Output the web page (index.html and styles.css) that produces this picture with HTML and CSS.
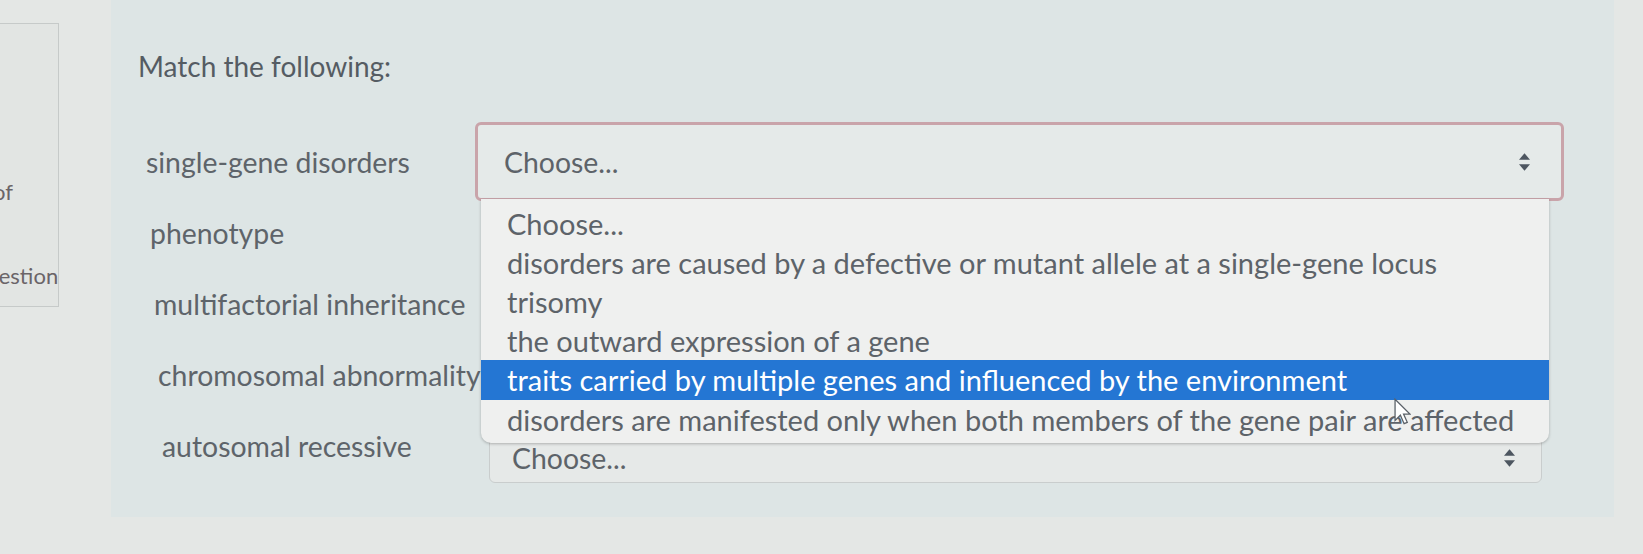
FILE: index.html
```html
<!DOCTYPE html>
<html lang="en">
<head>
<meta charset="utf-8">
<title>Match the following</title>
<link rel="stylesheet" href="styles.css">
</head>
<body>
<div class="page">
  <aside class="sidebar">
    <span class="side-of">of</span>
    <span class="side-question">Question</span>
  </aside>
  <main class="panel">
    <h1 class="title">Match the following:</h1>
    <div class="rows">
      <div class="label">single-gene disorders</div>
      <div class="cell">
        <div class="select focused"><span>Choose...</span><svg class="arrows" viewBox="0 0 10 16"><path d="M5 0 L10 6 H0 Z"/><path d="M0 10 H10 L5 16 Z"/></svg></div>
        <ul class="menu">
          <li>Choose...</li>
          <li>disorders are caused by a defective or mutant allele at a single-gene locus</li>
          <li>trisomy</li>
          <li>the outward expression of a gene</li>
          <li class="active">traits carried by multiple genes and influenced by the environment</li>
          <li>disorders are manifested only when both members of the gene pair are affected</li>
          <svg class="cursor" viewBox="0 0 16 26"><path d="M1 1 L1 21 L6 16 L9.5 24 L12.5 22.7 L9 15 L15 15 Z"/></svg>
        </ul>
      </div>
      <div class="label l2">phenotype</div>
      <div class="cell"><div class="select inner"><span>Choose...</span><svg class="arrows" viewBox="0 0 10 16"><path d="M5 0 L10 6 H0 Z"/><path d="M0 10 H10 L5 16 Z"/></svg></div></div>
      <div class="label l3">multifactorial inheritance</div>
      <div class="cell"><div class="select inner"><span>Choose...</span><svg class="arrows" viewBox="0 0 10 16"><path d="M5 0 L10 6 H0 Z"/><path d="M0 10 H10 L5 16 Z"/></svg></div></div>
      <div class="label l4">chromosomal abnormality</div>
      <div class="cell"><div class="select inner"><span>Choose...</span><svg class="arrows" viewBox="0 0 10 16"><path d="M5 0 L10 6 H0 Z"/><path d="M0 10 H10 L5 16 Z"/></svg></div></div>
      <div class="label l5">autosomal recessive</div>
      <div class="cell"><div class="select last"><span>Choose...</span><svg class="arrows" viewBox="0 0 10 16"><path d="M5 0 L10 6 H0 Z"/><path d="M0 10 H10 L5 16 Z"/></svg></div></div>
    </div>
  </main>
</div>
</body>
</html>
```
FILE: styles.css
```css
html, body {
  margin: 0;
  padding: 0;
}
body {
  width: 1643px;
  height: 554px;
  overflow: hidden;
  background: #e4e7e5;
  font-family: Lato, "Liberation Sans", sans-serif;
  color: #5e646a;
}
.page {
  display: flex;
  align-items: flex-start;
  height: 554px;
}
.sidebar {
  width: 58px;
  height: 282px;
  margin-top: 23px;
  border: 1px solid #c6cac9;
  border-left: none;
  background: #e2e5e3;
  display: flex;
  flex-direction: column;
  overflow: hidden;
  font-size: 22px;
  line-height: 26px;
  color: #6a6468;
  flex-shrink: 0;
}
.side-of {
  margin-top: 155px;
  margin-left: -7px;
}
.side-question {
  margin-top: 58px;
  margin-left: -31px;
  white-space: nowrap;
}
.panel {
  margin-left: 52px;
  width: 1503px;
  height: 517px;
  background: #dde5e5;
  padding-left: 27px;
  box-sizing: border-box;
  flex-shrink: 0;
}
.title {
  margin: 46px 0 0 0;
  font-size: 28px;
  font-weight: 400;
  line-height: 40px;
  color: #555c63;
}
.rows {
  margin-top: 43px;
  display: grid;
  grid-template-columns: 337px 1089px;
  grid-auto-rows: 66px;
  row-gap: 5px;
}
.label {
  font-size: 28.4px;
  display: flex;
  align-items: center;
  padding-left: 8px;
  white-space: nowrap;
}
.l2 { padding-left: 12px; }
.l3 { padding-left: 16px; }
.l4 { padding-left: 20px; }
.l5 { padding-left: 24px; }
.cell {
  position: relative;
}
.select {
  height: 66px;
  box-sizing: border-box;
  border: 1px solid #c9cdcd;
  border-radius: 6px;
  background: #e6e9e8;
  display: flex;
  align-items: center;
  justify-content: space-between;
  padding: 0 31px 0 26px;
  font-size: 28.4px;
  color: #5d6369;
}
.select.inner {
  margin-left: 10px;
  margin-right: 22px;
}
.select.focused {
  border: 3px solid #c9a4aa;
  background: #e5eae9;
  height: 79px;
  margin-top: -7px;
}
.select.last {
  margin-left: 14px;
  margin-right: 22px;
  margin-top: 4px;
  padding-left: 22px;
  padding-right: 26px;
  align-items: flex-end;
  padding-bottom: 7px;
}
.select.last .arrows {
  margin-bottom: 8px;
}
.arrows {
  width: 11px;
  height: 18px;
  fill: #4d5660;
}
.menu {
  position: absolute;
  top: 70px;
  left: 6px;
  width: 1068px;
  margin: 0;
  padding: 5px 0 0 0;
  height: 244px;
  box-sizing: border-box;
  list-style: none;
  background: #eff0ef;
  border-radius: 0 0 10px 10px;
  box-shadow: 0 1px 3px rgba(0,0,0,0.25);
  z-index: 5;
  font-size: 29px;
}
.menu li {
  height: 39px;
  line-height: 39px;
  padding-left: 26px;
  color: #5d6369;
  white-space: nowrap;
}
.menu li.active {
  height: 40px;
  line-height: 40px;
  background: #2476d3;
  color: #ffffff;
}
.cursor {
  position: absolute;
  left: 913px;
  top: 199px;
  width: 17px;
  height: 28px;
  fill: #ffffff;
  stroke: #5b6168;
  stroke-width: 1.2;
}
```
